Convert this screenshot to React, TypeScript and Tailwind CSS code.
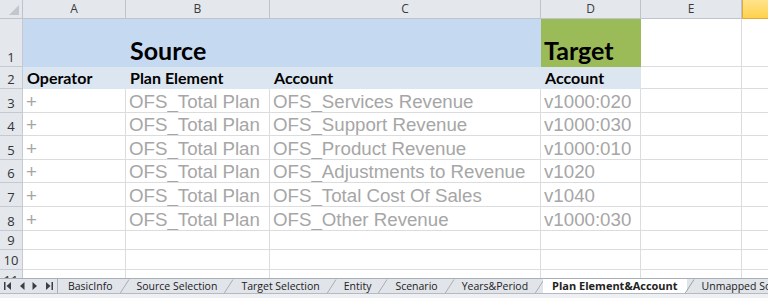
import React from 'react';

const cols = [
  { key: 'A', w: 'w-[103px]' },
  { key: 'B', w: 'w-[144px]' },
  { key: 'C', w: 'w-[271px]' },
  { key: 'D', w: 'w-[100px]' },
  { key: 'E', w: 'w-[101px]' },
];

const rows = [
  { n: 3, h: 'h-[24px]', b: 'OFS_Total Plan', c: 'OFS_Services Revenue', d: 'v1000:020' },
  { n: 4, h: 'h-[23px]', b: 'OFS_Total Plan', c: 'OFS_Support Revenue', d: 'v1000:030' },
  { n: 5, h: 'h-[24px]', b: 'OFS_Total Plan', c: 'OFS_Product Revenue', d: 'v1000:010' },
  { n: 6, h: 'h-[23px]', b: 'OFS_Total Plan', c: 'OFS_Adjustments to Revenue', d: 'v1020' },
  { n: 7, h: 'h-[24px]', b: 'OFS_Total Plan', c: 'OFS_Total Cost Of Sales', d: 'v1040' },
  { n: 8, h: 'h-[24px]', b: 'OFS_Total Plan', c: 'OFS_Other Revenue', d: 'v1000:030' },
];

const tabs = ['BasicInfo', 'Source Selection', 'Target Selection', 'Entity', 'Scenario', 'Years&Period'];

const RowHead = ({ n, h }: { n?: number; h: string }) => (
  <div
    className={`${h} w-[23px] shrink-0 flex items-end justify-center pb-[1px] bg-[#e4e7ec] border-r border-b border-[#c5cad2] text-[13px] leading-[16px] text-[#333]`}
  >
    {n}
  </div>
);

const DataCell = ({ w, children }: { w: string; children?: React.ReactNode }) => (
  <div
    className={`${w} shrink-0 flex items-end pl-[3px] border-r border-b border-[#dadcdd] text-[18.7px] leading-[21px] text-[#a6a6a6] whitespace-nowrap overflow-hidden`}
    style={{ fontFamily: '"Liberation Sans", Arial, sans-serif' }}
  >
    {children}
  </div>
);

const Slant = ({ active }: { active?: boolean }) => (
  <svg width="12" height="15" viewBox="0 0 12 15" className="shrink-0 -mx-[3px]">
    <path d="M1 14.5 L10 0.5" stroke={active ? '#9aa0a8' : '#a8aeb6'} strokeWidth="1" fill="none" />
  </svg>
);

export default function App() {
  const sans = { fontFamily: 'Lato, "Open Sans", sans-serif' };
  return (
    <div className="w-[768px] h-[298px] overflow-hidden bg-white flex flex-col" style={{ fontFamily: '"Open Sans", sans-serif' }}>
      <div className="h-[278px] overflow-hidden flex flex-col">
        {/* column headers */}
        <div className="flex h-[19px] shrink-0">
          <div className="w-[23px] shrink-0 bg-[#e4e7ec] border-r border-b border-[#bfc4cc] relative">
            <svg width="12" height="12" className="absolute right-[2px] bottom-[2px]">
              <path d="M11 1 L11 11 L1 11 Z" fill="#c3c7cd" />
            </svg>
          </div>
          {cols.map((c) => (
            <div
              key={c.key}
              className={`${c.w} shrink-0 bg-[#e4e7ec] border-r border-b border-[#bfc4cc] flex items-center justify-center text-[12px] text-[#3b3b3b]`}
            >
              {c.key}
            </div>
          ))}
          <div className="flex-1 bg-gradient-to-b from-[#ffe38a] to-[#ffd24a] border-b border-l border-[#e3a93c]" />
        </div>

        {/* row 1 */}
        <div className="flex h-[48px] shrink-0">
          <RowHead n={1} h="h-[48px]" />
          <div className="w-[103px] shrink-0 bg-[#c5d9f1]" />
          <div className="w-[144px] shrink-0 bg-[#c5d9f1] flex items-end pl-[4px] pb-[2px]">
            <span className="text-[25px] leading-[30px] font-bold text-black" style={sans}>Source</span>
          </div>
          <div className="w-[271px] shrink-0 bg-[#c5d9f1]" />
          <div className="w-[100px] shrink-0 bg-[#9bbb59] flex items-end pl-[3px] pb-[2px]">
            <span className="text-[25px] leading-[30px] font-bold text-black" style={sans}>Target</span>
          </div>
          <div className="w-[101px] shrink-0 border-r border-b border-[#dadcdd]" />
          <div className="flex-1 border-b border-[#dadcdd]" />
        </div>

        {/* row 2 */}
        <div className="flex h-[22px] shrink-0">
          <RowHead n={2} h="h-[22px]" />
          {['Operator', 'Plan Element', 'Account', 'Account'].map((t, i) => (
            <div
              key={i}
              className={`${cols[i].w} shrink-0 bg-[#dce6f1] flex items-end pl-[4px] pb-[1px] text-[16px] leading-[20px] font-bold text-black`}
              style={sans}
            >
              {t}
            </div>
          ))}
          <div className="w-[101px] shrink-0 border-r border-b border-[#dadcdd]" />
          <div className="flex-1 border-b border-[#dadcdd]" />
        </div>

        {/* data rows */}
        {rows.map((r) => (
          <div key={r.n} className={`flex ${r.h} shrink-0`}>
            <RowHead n={r.n} h={r.h} />
            <DataCell w="w-[103px]">+</DataCell>
            <DataCell w="w-[144px]">{r.b}</DataCell>
            <DataCell w="w-[271px]">{r.c}</DataCell>
            <DataCell w="w-[100px]">{r.d}</DataCell>
            <DataCell w="w-[101px]" />
            <div className="flex-1 border-b border-[#dadcdd]" />
          </div>
        ))}

        {[
          { n: 9, h: 'h-[19px]' },
          { n: 10, h: 'h-[20px]' },
          { n: 11, h: 'h-[20px]' },
        ].map((r) => (
          <div key={r.n} className={`flex ${r.h} shrink-0`}>
            <RowHead n={r.n} h={r.h} />
            {cols.map((c) => (
              <DataCell key={c.key} w={c.w} />
            ))}
            <div className="flex-1 border-b border-[#dadcdd]" />
          </div>
        ))}
      </div>

      {/* sheet tabs */}
      <div className="h-[15px] shrink-0 flex items-stretch bg-[#e1e4e9] border-t border-[#a9afb8]">
        <div className="w-[57px] shrink-0 flex items-center gap-[7px] pl-[4px]">
          <svg width="8" height="8" viewBox="0 0 8 8"><rect x="0" y="0" width="1.5" height="8" fill="#3a3f47" /><path d="M7 0 L2.5 4 L7 8 Z" fill="#3a3f47" /></svg>
          <svg width="6" height="8" viewBox="0 0 6 8"><path d="M5.5 0 L1 4 L5.5 8 Z" fill="#3a3f47" /></svg>
          <svg width="6" height="8" viewBox="0 0 6 8"><path d="M0.5 0 L5 4 L0.5 8 Z" fill="#3a3f47" /></svg>
          <svg width="8" height="8" viewBox="0 0 8 8"><path d="M1 0 L5.5 4 L1 8 Z" fill="#3a3f47" /><rect x="6.5" y="0" width="1.5" height="8" fill="#3a3f47" /></svg>
        </div>
        <div className="flex items-stretch border-l border-[#a9afb8] text-[10.5px] leading-[14px] text-[#222] whitespace-nowrap">
          {tabs.map((t, i) => (
            <React.Fragment key={t}>
              <div className={`flex items-center ${i === 0 ? 'pl-[10px] pr-[9px]' : 'px-[9px]'}`}>{t}</div>
              <Slant />
            </React.Fragment>
          ))}
          <div className="flex items-center px-[9px] bg-white font-bold text-[11px]">Plan Element&amp;Account</div>
          <Slant active />
          <div className="flex items-center px-[9px]">Unmapped Source</div>
        </div>
      </div>
      <div className="h-[5px] shrink-0 bg-[#eef0f3] border-t border-[#b4bac2]" />
    </div>
  );
}
